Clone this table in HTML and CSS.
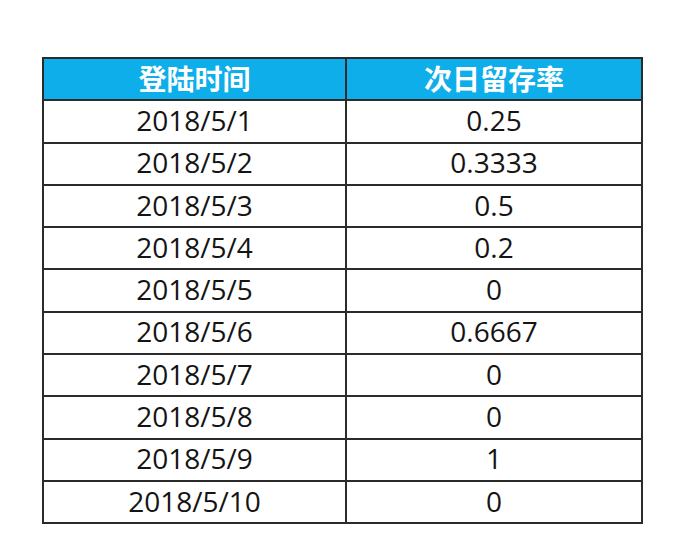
FILE: index.html
```html
<!DOCTYPE html>
<html lang="zh">
<head>
<meta charset="utf-8">
<link rel="stylesheet" href="styles.css">
</head>
<body>
<table class="retention">
  <colgroup><col class="c1"><col class="c2"></colgroup>
  <thead>
    <tr><th>登陆时间</th><th>次日留存率</th></tr>
  </thead>
  <tbody>
    <tr><td>2018/5/1</td><td>0.25</td></tr>
    <tr><td>2018/5/2</td><td>0.3333</td></tr>
    <tr><td>2018/5/3</td><td>0.5</td></tr>
    <tr><td>2018/5/4</td><td>0.2</td></tr>
    <tr><td>2018/5/5</td><td>0</td></tr>
    <tr><td>2018/5/6</td><td>0.6667</td></tr>
    <tr><td>2018/5/7</td><td>0</td></tr>
    <tr><td>2018/5/8</td><td>0</td></tr>
    <tr><td>2018/5/9</td><td>1</td></tr>
    <tr><td>2018/5/10</td><td>0</td></tr>
  </tbody>
</table>
</body>
</html>
```
FILE: styles.css
```css
html, body {
  margin: 0;
  padding: 0;
  background: #ffffff;
}
body {
  padding: 57px 0 0 42px;
  font-family: "Open Sans", "Noto Sans CJK SC", sans-serif;
}
.retention {
  border-collapse: collapse;
  width: 599px;
  table-layout: fixed;
}
.retention .c1 { width: 303px; }
.retention .c2 { width: 296px; }
.retention th,
.retention td {
  border: 2px solid #2b2b2b;
  height: 42.3px;
  padding: 0 0 3px 0;
  text-align: center;
  vertical-align: middle;
  box-sizing: border-box;
  line-height: 1;
}
.retention th {
  background: #0eaeea;
  color: #ffffff;
  font-family: "Noto Sans CJK SC", sans-serif;
  font-weight: 700;
  font-size: 28px;
}
.retention td {
  color: #141414;
  font-size: 28px;
  font-weight: 400;
}
```
